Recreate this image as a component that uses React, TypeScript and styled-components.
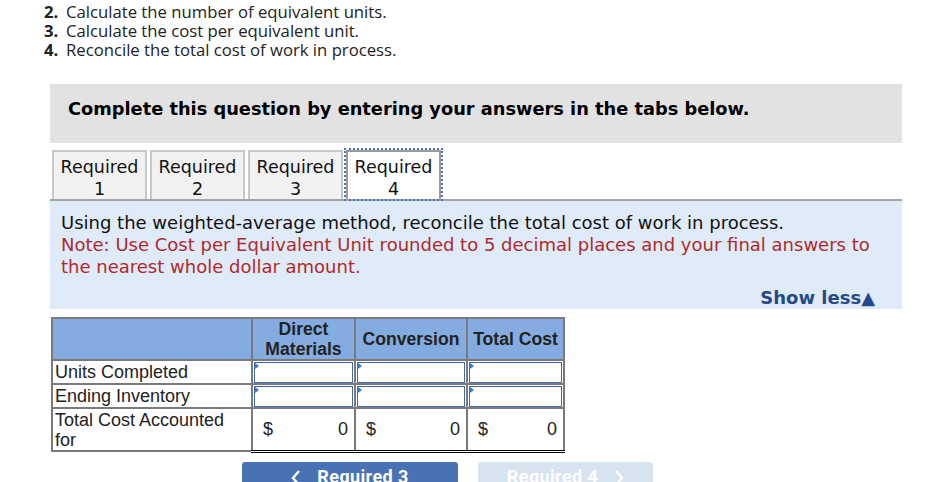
import styled, { createGlobalStyle } from "styled-components";

const GlobalStyle = createGlobalStyle`
    body {
        margin: 0;
        background: #ffffff;
    }
    * {
        box-sizing: border-box;
    }
`;

const Page = styled.div`
    width: 940px;
    height: 482px;
    overflow: hidden;
    padding-top: 2px;
`;

const Steps = styled.ol`
    list-style: none;
    margin: 0;
    padding: 0 0 0 44px;
    font-family: "Open Sans", sans-serif;
    font-size: 16.7px;
    line-height: 19px;
    color: #222;
`;

const Step = styled.li`
    display: flex;
    gap: 4px;
`;

const StepNum = styled.b`
    flex: 0 0 18px;
`;

const Banner = styled.div`
    margin: 25px 38px 0 50px;
    height: 59px;
    background: #e2e2e2;
    padding: 14px 0 0 18px;
    font-family: "DejaVu Sans", Verdana, sans-serif;
    font-weight: bold;
    font-size: 17.8px;
    line-height: 22px;
    color: #000;
`;

const TabStrip = styled.div`
    margin: 7px 38px 0 50px;
    display: flex;
    gap: 3px;
    padding-left: 2px;
    border-bottom: 2px solid #a6a6a6;
`;

const Tab = styled.div<{ $active?: boolean }>`
    width: 95px;
    height: 49px;
    padding-top: 4px;
    text-align: center;
    font-family: "DejaVu Sans", Verdana, sans-serif;
    font-size: 17.5px;
    line-height: 22px;
    color: #111;
    background: ${(p) => (p.$active ? "#ffffff" : "#f2f2f2")};
    border: 2px solid ${(p) => (p.$active ? "#9a9a9a" : "#c8c8c8")};
    border-bottom: none;
    outline: ${(p) => (p.$active ? "2px dotted #4a74c4" : "none")};
    outline-offset: 0;
`;

const Prompt = styled.div`
    margin: 0 38px 0 50px;
    height: 108px;
    background: #dfebf8;
    padding: 11px 27px 0 11px;
    font-family: "DejaVu Sans", Verdana, sans-serif;
    font-size: 18px;
    line-height: 22px;
    display: flex;
    flex-direction: column;
`;

const Instruction = styled.div`
    color: #111;
`;

const Note = styled.div`
    color: #b02a2a;
`;

const ShowLess = styled.div`
    margin-top: 9px;
    align-self: flex-end;
    color: #264a87;
    font-weight: bold;
`;

const Grid = styled.table`
    margin: 8px 0 0 51px;
    border-collapse: collapse;
    border: 2px solid #7a7a7a;
    font-family: "Liberation Sans", Arial, sans-serif;
    font-size: 18px;
    color: #222;
`;

const HeadCell = styled.th<{ $w: number }>`
    width: ${(p) => p.$w}px;
    height: 41px;
    background: #84ace0;
    border: 2px solid #7a7a7a;
    font-weight: bold;
    font-size: 17.6px;
    line-height: 20px;
    padding: 0 1px;
    text-align: center;
`;

const LabelCell = styled.td<{ $h: number }>`
    height: ${(p) => p.$h}px;
    border: 2px solid #7a7a7a;
    padding: 0 2px;
    line-height: 20px;
    vertical-align: middle;
`;

const InputCell = styled.td`
    height: 24px;
    border: 2px solid #7a7a7a;
    padding: 0;
`;

const Entry = styled.div`
    position: relative;
    height: 21px;
    margin: 0 1px;
    background: #fff;
    border: 1px solid #3f6bb3;

    &::before {
        content: "";
        position: absolute;
        top: 0;
        left: 0;
        border-top: 3px solid transparent;
        border-bottom: 3px solid transparent;
        border-left: 4px solid #3f78c8;
    }
`;

const TotalCell = styled.td`
    height: 43px;
    border-left: 2px solid #7a7a7a;
    border-right: 2px solid #7a7a7a;
    border-top: 2px solid #000;
    border-bottom: 3px double #000;
    padding: 0 6px 0 10px;
`;

const Money = styled.div`
    display: flex;
    justify-content: space-between;
`;

const NavRow = styled.div`
    margin: 9px 0 0 242px;
    display: flex;
    gap: 20px;
`;

const NavButton = styled.div<{ $w: number; $disabled?: boolean }>`
    width: ${(p) => p.$w}px;
    height: 40px;
    border-radius: 3px 3px 0 0;
    background: ${(p) => (p.$disabled ? "#d8e3f0" : "#4872b4")};
    color: #fff;
    display: flex;
    justify-content: center;
    align-items: flex-start;
    gap: 16px;
    padding-top: 3px;
    font-family: "Roboto", "Open Sans", sans-serif;
    font-weight: bold;
    font-size: 18px;
    letter-spacing: 0.4px;
    line-height: 24px;

    svg {
        margin-top: 5px;
    }
`;

const Chevron = ({ dir }: { dir: "left" | "right" }) => (
    <svg width="10" height="16" viewBox="0 0 10 16">
        <path
            d={dir === "left" ? "M8 1 L2 8 L8 15" : "M2 1 L8 8 L2 15"}
            fill="none"
            stroke="#fff"
            strokeWidth="2.4"
        />
    </svg>
);

const Blank = () => (
    <InputCell>
        <Entry />
    </InputCell>
);

const Total = () => (
    <TotalCell>
        <Money>
            <span>$</span>
            <span>0</span>
        </Money>
    </TotalCell>
);

export default function App() {
    return (
        <Page>
            <GlobalStyle />
            <Steps>
                <Step>
                    <StepNum>2.</StepNum>
                    <span>Calculate the number of equivalent units.</span>
                </Step>
                <Step>
                    <StepNum>3.</StepNum>
                    <span>Calculate the cost per equivalent unit.</span>
                </Step>
                <Step>
                    <StepNum>4.</StepNum>
                    <span>Reconcile the total cost of work in process.</span>
                </Step>
            </Steps>
            <Banner>Complete this question by entering your answers in the tabs below.</Banner>
            <TabStrip>
                <Tab>Required<br />1</Tab>
                <Tab>Required<br />2</Tab>
                <Tab>Required<br />3</Tab>
                <Tab $active>Required<br />4</Tab>
            </TabStrip>
            <Prompt>
                <Instruction>
                    Using the weighted-average method, reconcile the total cost of work in process.
                </Instruction>
                <Note>
                    Note: Use Cost per Equivalent Unit rounded to 5 decimal places and your final answers to the nearest whole dollar amount.
                </Note>
                <ShowLess>Show less▲</ShowLess>
            </Prompt>
            <Grid>
                <thead>
                    <tr>
                        <HeadCell $w={200}></HeadCell>
                        <HeadCell $w={103}>Direct<br />Materials</HeadCell>
                        <HeadCell $w={112}>Conversion</HeadCell>
                        <HeadCell $w={97}>Total Cost</HeadCell>
                    </tr>
                </thead>
                <tbody>
                    <tr>
                        <LabelCell $h={24}>Units Completed</LabelCell>
                        <Blank />
                        <Blank />
                        <Blank />
                    </tr>
                    <tr>
                        <LabelCell $h={24}>Ending Inventory</LabelCell>
                        <Blank />
                        <Blank />
                        <Blank />
                    </tr>
                    <tr>
                        <LabelCell $h={43}>Total Cost Accounted<br />for</LabelCell>
                        <Total />
                        <Total />
                        <Total />
                    </tr>
                </tbody>
            </Grid>
            <NavRow>
                <NavButton $w={216}>
                    <Chevron dir="left" />
                    Required 3
                </NavButton>
                <NavButton $w={175} $disabled>
                    Required 4
                    <Chevron dir="right" />
                </NavButton>
            </NavRow>
        </Page>
    );
}
